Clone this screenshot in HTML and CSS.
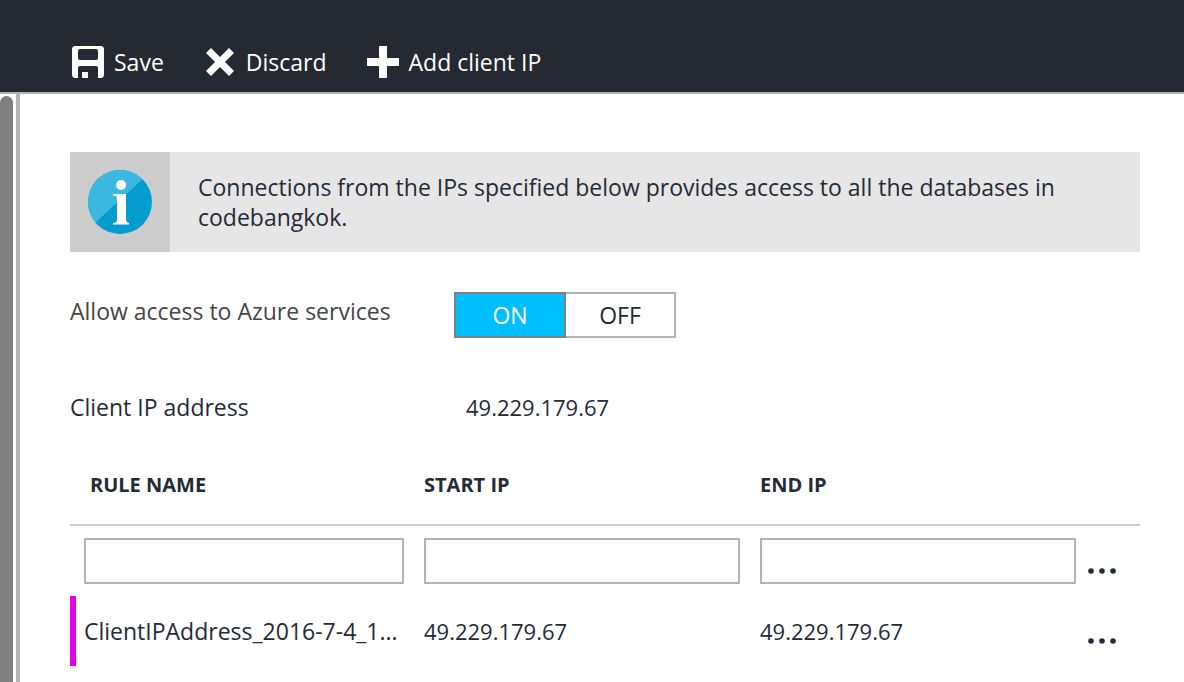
FILE: index.html
```html
<!DOCTYPE html>
<html lang="en">
<head>
  <meta charset="utf-8">
  <title>Firewall settings</title>
  <meta name="viewport" content="width=device-width, initial-scale=1">
  <link rel="stylesheet" href="styles.css">
</head>
<body>
  <header class="toolbar">
    <button type="button" class="command">
      <svg class="icon" viewBox="0 0 32 32" aria-hidden="true">
        <path fill="#fff" fill-rule="evenodd" d="M2 0H30L32 2V30L30 32H26V22Q26 20 24 20H8Q6 20 6 22V32H2L0 30V2ZM8 3Q6 3 6 5V12Q6 14 8 14H24Q26 14 26 12V5Q26 3 24 3Z"/>
        <path fill="#fff" d="M10 26h6v6h-6z"/>
      </svg>
      Save
    </button>
    <button type="button" class="command">
      <svg class="icon" viewBox="0 0 32 32" aria-hidden="true">
        <path fill="none" stroke="#fff" stroke-width="7" d="M4.500 4.500L27.500 27.500M27.500 4.500L4.500 27.500"/>
      </svg>
      Discard
    </button>
    <button type="button" class="command">
      <svg class="icon" viewBox="0 0 32 32" aria-hidden="true">
        <path fill="#fff" d="M12 0h8v12h12v8H20v12h-8V20H0v-8h12z"/>
      </svg>
      Add client IP
    </button>
  </header>

  <div class="blade">
    <div class="rail"><div class="thumb"></div></div>
    <main class="content">
      <div class="info">
        <div class="info-icon">
          <svg width="64" height="64" viewBox="0 0 64 64" aria-hidden="true">
            <circle cx="32" cy="32" r="32" fill="#059dd0"/>
            <path fill="#3bb8df" d="M54.500 9.200A32 32 0 0 0 7.500 52.500Z"/>
            <circle cx="33" cy="15" r="5" fill="#fff"/>
            <path fill="#fff" d="M25 24H38V50Q38 52 41 53V54.500H25V53Q29 52.500 29 50V28Q29 26 25 25.500Z"/>
          </svg>
        </div>
        <p class="info-text">Connections from the IPs specified below provides access to all the databases in codebangkok.</p>
      </div>

      <div class="field">
        <span class="field-label muted" id="allowLabel">Allow access to Azure services</span>
        <div class="toggle" role="radiogroup" aria-labelledby="allowLabel">
          <input type="radio" name="allow" id="allowOn" checked>
          <label for="allowOn">ON</label>
          <input type="radio" name="allow" id="allowOff">
          <label for="allowOff">OFF</label>
        </div>
      </div>

      <div class="field">
        <span class="field-label">Client IP address</span>
        <span class="field-value ip">49.229.179.67</span>
      </div>

      <table class="rules">
        <colgroup>
          <col class="col-name">
          <col class="col-start">
          <col>
          <col class="col-menu">
        </colgroup>
        <thead>
          <tr>
            <th id="ruleName">RULE NAME</th>
            <th id="startIp">START IP</th>
            <th id="endIp">END IP</th>
            <td></td>
          </tr>
        </thead>
        <tbody>
          <tr>
            <td><input type="text" class="textbox" aria-labelledby="ruleName"></td>
            <td><input type="text" class="textbox" aria-labelledby="startIp"></td>
            <td><input type="text" class="textbox" aria-labelledby="endIp"></td>
            <td>
              <button type="button" class="more" aria-label="More">
                <svg width="28" height="6" viewBox="0 0 28 6"><circle cx="3" cy="3" r="2.800"/><circle cx="14" cy="3" r="2.800"/><circle cx="25" cy="3" r="2.800"/></svg>
              </button>
            </td>
          </tr>
          <tr class="changed">
            <td>ClientIPAddress_2016-7-4_1...</td>
            <td class="ip">49.229.179.67</td>
            <td class="ip">49.229.179.67</td>
            <td>
              <button type="button" class="more" aria-label="More">
                <svg width="28" height="6" viewBox="0 0 28 6"><circle cx="3" cy="3" r="2.800"/><circle cx="14" cy="3" r="2.800"/><circle cx="25" cy="3" r="2.800"/></svg>
              </button>
            </td>
          </tr>
        </tbody>
      </table>
    </main>
  </div>
</body>
</html>
```

FILE: styles.css
```css
* {
  box-sizing: border-box;
}

body {
  margin: 0;
  display: flex;
  flex-direction: column;
  min-height: 100vh;
  background: #fff;
  color: #252b36;
  font-family: "Segoe UI", "Open Sans", "Noto Sans", sans-serif;
  font-size: 23px;
  line-height: 30px;
}

button, input {
  font: inherit;
  color: inherit;
}

/* Command bar */
.toolbar {
  display: flex;
  gap: 40px;
  padding: 46px 72px 14px;
  background: #252931;
  border-bottom: 2px solid #b3b3b3;
}

.command {
  display: flex;
  align-items: center;
  gap: 10px;
  height: 32px;
  padding: 0;
  border: 0;
  background: none;
  color: #fff;
  font-weight: 500;
  cursor: pointer;
}

.icon {
  width: 32px;
  height: 32px;
}

/* Blade */
.blade {
  display: flex;
  flex: 1;
}

.rail {
  display: flex;
  width: 20px;
  padding-top: 2px;
  border-right: 4px solid #b3b3b3;
}

.thumb {
  width: 13px;
  background: #808080;
  border-radius: 7px 7px 0 0;
}

.content {
  flex: 1;
  padding: 58px 44px 16px 50px;
}

.info {
  display: flex;
  min-height: 100px;
  margin-bottom: 40px;
  background: #e6e6e6;
}

.info-icon {
  display: flex;
  align-items: center;
  justify-content: center;
  width: 100px;
  background: #ccc;
}

.info-text {
  flex: 1;
  align-self: center;
  margin: 0;
  padding: 0 28px;
}

.field {
  display: flex;
  align-items: center;
  min-height: 46px;
  margin-bottom: 50px;
}

.field + .field {
  margin-bottom: 12px;
}

.field-label {
  width: 384px;
  padding-bottom: 8px;
}

.muted {
  color: #464646;
}

.field-value {
  padding: 0 12px 8px;
}

.ip {
  font-size: 22px;
}

/* ON / OFF switch */
.toggle {
  display: flex;
}

.toggle input {
  position: absolute;
  opacity: 0;
}

.toggle label {
  width: 110px;
  height: 46px;
  border: 2px solid #b3b3b3;
  border-left: 0;
  line-height: 42px;
  text-align: center;
  cursor: pointer;
}

.toggle label:first-of-type {
  width: 112px;
  border-left: 2px solid #b3b3b3;
}

.toggle input:checked + label {
  background: #00bfff;
  border-color: #808080;
  color: #fff;
}

/* Rules */
.rules {
  width: 100%;
  table-layout: fixed;
  border-collapse: separate;
  border-spacing: 0;
}

.col-name {
  width: 354px;
}

.col-start {
  width: 336px;
}

.col-menu {
  width: 64px;
}

.rules th, .rules td {
  height: 70px;
  padding: 0 20px 0 0;
  text-align: left;
}

.rules thead th, .rules thead td {
  height: 80px;
  border-bottom: 2px solid #ccc;
  font-size: 20px;
}

.rules th:first-child {
  padding-left: 20px;
}

.rules td:first-child {
  padding-left: 14px;
  white-space: nowrap;
}

.rules td:nth-child(3) {
  padding-right: 0;
}

.rules .changed td:first-child {
  padding-left: 8px;
  border-left: 6px solid #e500e5;
}

.textbox {
  display: block;
  width: 100%;
  height: 46px;
  padding: 0 10px;
  border: 2px solid #b3b3b3;
  background: #fff;
}

.rules .more {
  display: flex;
  padding: 20px 0 0 12px;
  border: 0;
  background: none;
  cursor: pointer;
}

.more svg {
  fill: #252b36;
}
```
